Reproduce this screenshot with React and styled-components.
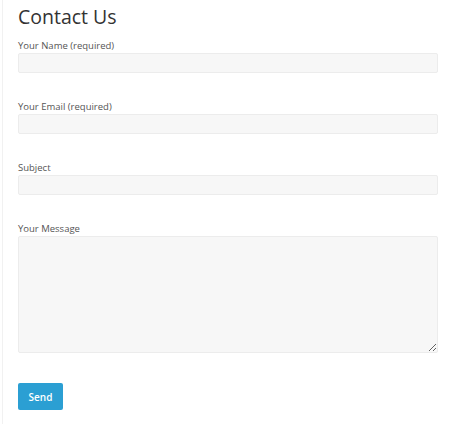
import React from 'react';
import styled, { createGlobalStyle } from 'styled-components';

const GlobalStyle = createGlobalStyle`
  body {
    margin: 0;
    background: #fff;
    font-family: 'Open Sans', 'Liberation Sans', sans-serif;
  }
`;

const Page = styled.div`
  min-height: 424px;
  box-sizing: border-box;
  border-left: 1px solid #f1f1f1;
  margin-left: 2px;
  padding: 3px 0 0 15px;
`;

const Title = styled.h1`
  margin: 0 0 8px;
  font-size: 19.5px;
  font-weight: 400;
  line-height: 28px;
  color: #333;
`;

const Form = styled.form`
  width: 420px;
  display: flex;
  flex-direction: column;
`;

const Field = styled.label`
  display: flex;
  flex-direction: column;
  margin-bottom: 27px;
`;

const LabelText = styled.span`
  font-size: 9.5px;
  line-height: 13px;
  color: #555;
  margin-bottom: 1px;
`;

const Input = styled.input`
  box-sizing: border-box;
  height: 20px;
  width: 100%;
  background: #f7f7f7;
  border: 1px solid #ececec;
  border-radius: 2px;
  outline: none;
`;

const TextArea = styled.textarea`
  box-sizing: border-box;
  height: 117px;
  width: 100%;
  background: #f7f7f7;
  border: 1px solid #ececec;
  border-radius: 2px;
  outline: none;
  resize: vertical;
`;

const Button = styled.button`
  align-self: flex-start;
  width: 45px;
  height: 27px;
  margin-top: 3px;
  padding: 0;
  border: none;
  border-radius: 2px;
  background: #2b9fd3;
  color: #fff;
  font-family: 'Open Sans', 'Liberation Sans', sans-serif;
  font-size: 10px;
  font-weight: 600;
`;

const fields = [
  { label: 'Your Name (required)' },
  { label: 'Your Email (required)' },
  { label: 'Subject' },
];

export default function App() {
  return (
    <>
      <GlobalStyle />
      <Page>
        <Title>Contact Us</Title>
        <Form onSubmit={(e) => e.preventDefault()}>
          {fields.map((f) => (
            <Field key={f.label}>
              <LabelText>{f.label}</LabelText>
              <Input type="text" />
            </Field>
          ))}
          <Field>
            <LabelText>Your Message</LabelText>
            <TextArea />
          </Field>
          <Button type="submit">Send</Button>
        </Form>
      </Page>
    </>
  );
}
